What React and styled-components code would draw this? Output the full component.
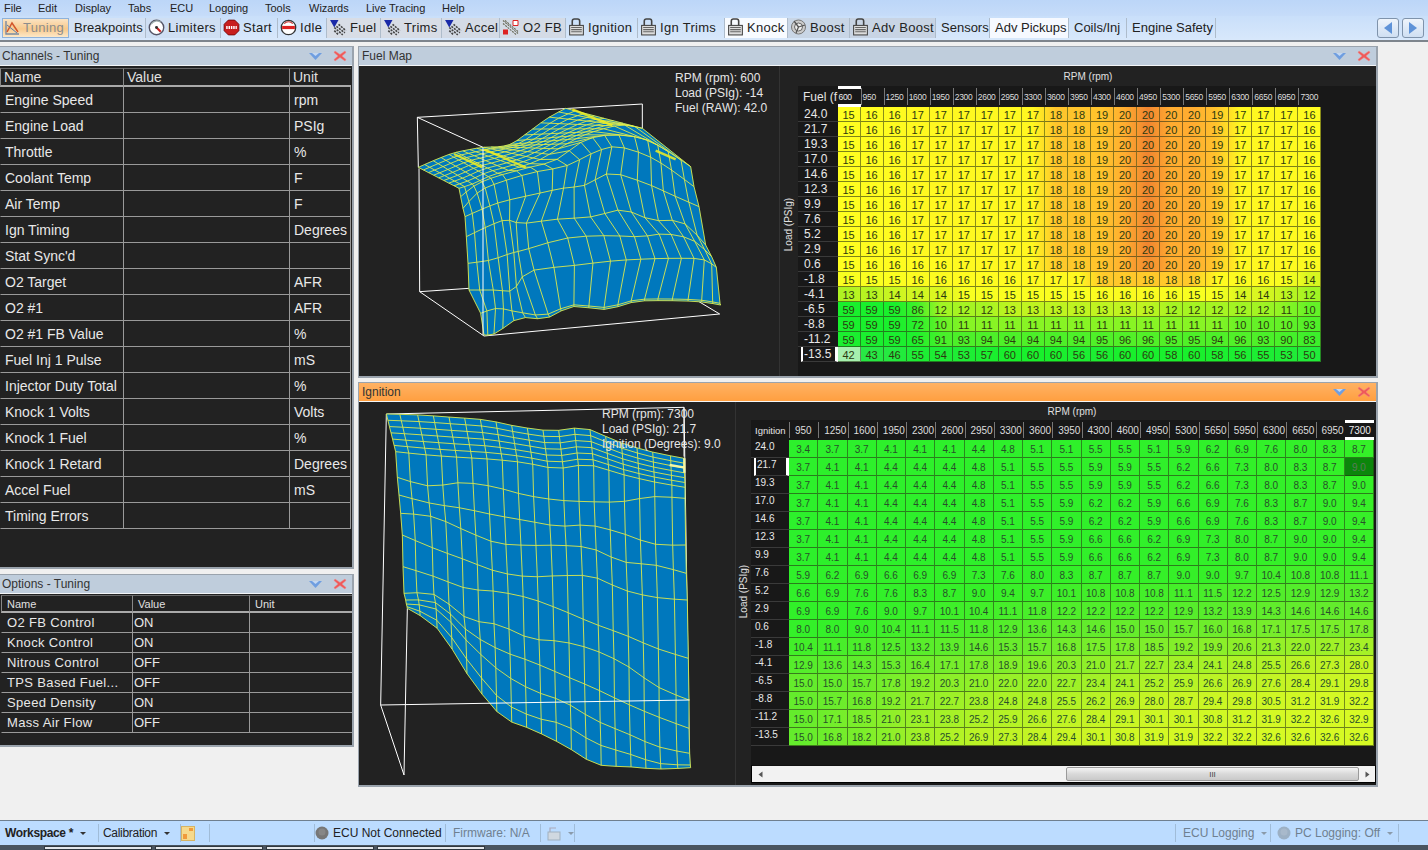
import React from 'react';
import styled, { createGlobalStyle } from 'styled-components';

const Global = createGlobalStyle`
  html, body { margin: 0; padding: 0; background: #f0f0f0; }
  * { box-sizing: border-box; }
  body { font-family: "Liberation Sans", Arial, sans-serif; }
`;

const Page = styled.div`
  width: 1428px; height: 850px; overflow: hidden; display: flex; flex-direction: column;
  background: #f0f0f0; color: #222;
`;
const Menu = styled.div`
  height: 16px; display: flex; align-items: center; padding-left: 4px;
  background: linear-gradient(#bcd6f8, #c6dcf9); font-size: 11px; color: #222;
`;
const MenuItem = styled.span` width: ${p => p.$w}px; flex: none; `;
const TabBar = styled.div`
  height: 26px; display: flex; align-items: stretch; padding: 2px 4px 2px 2px;
  background: linear-gradient(#c9dffa, #d8e8fb); border-bottom: 2px solid #7d848c;
`;
const Tab = styled.div`
  width: ${p => p.$w}px; flex: none; display: flex; align-items: center; gap: 3px; padding-left: ${p => p.$icon ? 2 : 5}px;
  font-size: 13px; letter-spacing: ${p => p.$icon ? 0.3 : 0}px; white-space: nowrap; overflow: hidden; padding-bottom: 2px;
  color: ${p => p.$active ? '#8d8d8d' : '#222'};
  border-right: 1px solid #aebccb;
  background: ${p => p.$active ? 'linear-gradient(#fbe3c2,#f8c98c 55%,#fde8c8)' : p.$bg || 'transparent'};
  ${p => p.$active && 'border: 1px solid #8fb2da;'}
`;
const NavGroup = styled.div` margin-left: auto; display: flex; gap: 3px; `;
const NavButton = styled.button`
  width: 22px; height: 20px; padding: 0; display: flex; align-items: center; justify-content: center;
  border: 1px solid #7f93ab; border-radius: 3px; background: linear-gradient(#eef4fb,#cfdff2);
`;
const Main = styled.div`
  flex: 1; min-height: 0; display: flex; padding-top: 4px; gap: 4px; background: #f0f0f0;
`;
const LeftCol = styled.div` width: 354px; flex: none; display: flex; flex-direction: column; gap: 5px; `;
const RightCol = styled.div` width: 1020px; flex: none; display: flex; flex-direction: column; gap: 4px; `;
const Panel = styled.section`
  height: ${p => p.$h}px; flex: none; display: flex; flex-direction: column;
  border: 1px solid #9aa3ad; border-left-width: ${p => p.$flush ? 0 : 1}px; border-right-width: 2px; border-bottom-width: 2px; background: #f4f6f8;
`;
const PanelHead = styled.header`
  height: 18px; flex: none; display: flex; align-items: center; padding: 0 5px 0 ${p => p.$flush ? 2 : 3}px;
  font-size: 12px; color: #333; background: ${p => p.$hot ? 'linear-gradient(#ffb264,#ff9f40)' : '#bfcddc'};
  margin-bottom: 1px;
`;
const HeadTitle = styled.span` flex: 1; `;
const HeadIcons = styled.span` display: flex; align-items: center; gap: 11px; `;
const PanelBody = styled.div`
  flex: 1; min-height: 0; display: flex; background: #222; position: relative; overflow: hidden;
`;
const TableWrap = styled.div` flex: 1; padding: ${p => p.$p || '2px 2px 0 0'}; background: #222; `;
const DataTable = styled.div`
  display: grid; grid-template-columns: ${p => p.$cols}; color: #e8e8e8; font-size: ${p => p.$fs}px;
`;
const DataHead = styled.div`
  height: ${p => p.$h}px; display: flex; align-items: center; padding-left: ${p => p.$pl}px;
  border-top: 1px solid #666; border-bottom: 2px solid #aaa; border-left: 1px solid #888; font-size: ${p => p.$fs}px; color: #e0e0e0;
`;
const DataCell = styled.div`
  height: ${p => p.$h}px; display: flex; align-items: center; padding-left: ${p => p.$pl}px; white-space: nowrap;
  letter-spacing: ${p => p.$ls || 0}px;
  border-bottom: 1px solid #9a9a9a; border-left: 1px solid ${p => p.$first ? 'transparent' : '#9a9a9a'};
  border-right: ${p => p.$last ? '1px solid #9a9a9a' : '0'};
`;
const ChartArea = styled.div`
  width: ${p => p.$w}px; height: 100%; flex: none; position: relative; border-right: 1px solid #333;
`;
const ChartSvg = styled.svg` display: block; `;
const Readout = styled.div`
  position: absolute; left: ${p => p.$x}px; top: ${p => p.$y}px; color: #e6e6e6; font-size: 12px; line-height: 15px; white-space: nowrap;
`;
const MapArea = styled.div` flex: 1; min-width: 0; display: flex; flex-direction: column; `;
const AxisTitle = styled.div`
  height: ${p => p.$h}px; flex: none; text-align: center; font-size: 10px; color: #e0e0e0; line-height: ${p => p.$h + 1}px;
  padding-left: ${p => p.$pl || 0}px;
`;
const MapRow = styled.div` flex: 1; min-height: 0; display: flex; `;
const YAxis = styled.div`
  width: ${p => p.$w}px; flex: none; display: flex; align-items: center; justify-content: center; padding-bottom: ${p => p.$pb || 0}px;
`;
const YLabel = styled.span`
  transform: rotate(-90deg); white-space: nowrap; font-size: 10px; color: #e0e0e0;
`;
const GridBox = styled.div` flex: 1; min-width: 0; background: #181818; display: flex; flex-direction: column; `;
const HeatGrid = styled.div`
  display: grid; grid-template-columns: ${p => p.$label}px repeat(${p => p.$n}, ${p => p.$cw}px);
  grid-auto-rows: ${p => p.$rh}px; grid-template-rows: ${p => p.$hh}px;
`;
const Corner = styled.div`
  color: #e4e4e4; font-size: ${p => p.$fs}px; display: flex; align-items: center; padding-left: ${p => p.$pl}px; overflow: hidden; white-space: nowrap; justify-content: flex-start;
`;
const ColHead = styled.div`
  color: #ddd; font-size: ${p => p.$fs}px; letter-spacing: ${p => p.$ls || 0}px; display: flex; align-items: center; padding-left: ${p => p.$hp}px;
  border-left: 1px solid #777; margin: 2px 0;
  ${p => p.$sel && 'margin: 0; border-left: 0; border-top: 3px solid #fff; border-bottom: 3px solid #fff; color: #eee;'}
`;
const RowHead = styled.div`
  color: #e8e8e8; font-size: ${p => p.$fs}px; display: flex; align-items: ${p => p.$top ? 'flex-start' : 'center'}; padding-left: ${p => p.$pl}px; 
  padding-top: ${p => p.$top ? 1 : 0}px;
  ${p => p.$sel && 'border-left: 2px solid #fff; border-right: 3px solid #fff; padding-left: 1px; margin-left: 3px;'}
  border-bottom: 1px solid #3a3a3a; overflow: hidden; white-space: nowrap;
`;
const HeatCell = styled.div`
  display: flex; align-items: center; justify-content: center; color: ${p => p.$ink || '#2c3a10'}; font-size: ${p => p.$fs}px;
  border-right: 1px solid rgba(40,50,20,.55); border-bottom: 1px solid rgba(40,50,20,.6); padding-top: ${p => p.$pt || 0}px;
`;
const ScrollBar = styled.div`
  margin-top: auto; margin-bottom: 2px; height: 18px; flex: none; display: flex; align-items: center; background: #f2f2f2; border: 1px solid #000; border-top-color: #111;
`;
const ScrollArrow = styled.span` width: 16px; flex: none; display: flex; justify-content: center; `;
const ScrollTrack = styled.div` flex: 1; display: flex; justify-content: flex-end; height: 100%; padding: 1px 0; `;
const ScrollThumb = styled.div`
  width: 293px; height: 100%; display: flex; align-items: center; justify-content: center; font-size: 8px; color: #444;
  background: linear-gradient(#f4f4f4,#d9d9d9 50%,#c9c9c9); border: 1px solid #9a9a9a; border-radius: 2px;
`;
const Status = styled.footer`
  height: 25px; flex: none; display: flex; align-items: center; background: #bcdcff; border-top: 1px solid #6f7f8f; font-size: 12px; color: #222; padding-left: 5px;
`;
const StatusItem = styled.div`
  display: flex; align-items: center; gap: 4px; flex: none; height: 18px; white-space: nowrap;
  width: ${p => p.$w ? p.$w + 'px' : 'auto'}; margin-left: ${p => p.$ml || 0}px;
  color: ${p => p.$dim ? '#6f8090' : '#222'}; font-weight: ${p => p.$bold ? 700 : 400};
  letter-spacing: ${p => p.$ls || 0}px;
  border-right: ${p => p.$sep ? '1px solid #a0bcd8' : '0'};
  svg { flex: none; }
`;
const Caret = styled.i`
  width: 0; height: 0; border-left: 3px solid transparent; border-right: 3px solid transparent; border-top: 3px solid ${p => p.$dim ? '#8a9aaa' : '#333'}; margin-left: 3px;
`;
const Task = styled.div`
  height: 5px; flex: none; display: flex; gap: 3px; background: #4a5560; padding-left: 44px; padding-top: 1px;
`;
const TaskButton = styled.div` width: 108px; height: 4px; background: #e4e8ec; border: 1px solid #30383f; `;

const CloseIcon = () => (
  <svg width="14" height="12" viewBox="0 0 14 12"><path d="M2 1 L7 4.5 L12 1 L13 2.5 L9 6 L13 9.5 L12 11 L7 7.5 L2 11 L1 9.5 L5 6 L1 2.5Z" fill="#ef5a5a" stroke="#e88" strokeWidth=".5"/></svg>
);
const DropIcon = () => (
  <svg width="13" height="9" viewBox="0 0 13 9"><path d="M0 1 H13 L6.5 8Z" fill="#6f9ee0"/><path d="M3 1 H10 L6.5 4Z" fill="#c4d8f2"/></svg>
);
const HeadButtons = () => <HeadIcons><DropIcon /><CloseIcon /></HeadIcons>;

const IcoTuning = () => <svg width="15" height="15" viewBox="0 0 15 15"><path d="M1 1 V14 H14" fill="none" stroke="#7a8aa0" strokeWidth="1.4"/><path d="M2 12 L7 3 L13 12" fill="none" stroke="#d2562c" strokeWidth="1.5"/><path d="M2 5 L12 13" stroke="#5a7aa8" strokeWidth="1"/></svg>;
const IcoGauge = () => <svg width="17" height="17" viewBox="0 0 16 16"><circle cx="8" cy="8" r="6.8" fill="#fff" stroke="#556" strokeWidth="1.3"/><path d="M3 5 A6 6 0 0 1 12 3" fill="none" stroke="#9aa" strokeWidth="1.2"/><path d="M8 8 L12 12" stroke="#c22" strokeWidth="2"/><circle cx="8" cy="8" r="1.4" fill="#333"/></svg>;
const IcoStart = () => <svg width="17" height="17" viewBox="0 0 16 16"><path d="M5 1 H11 L15 5 V11 L11 15 H5 L1 11 V5Z" fill="#c81e1e" stroke="#600" strokeWidth=".7"/><path d="M3 8 H13" stroke="#fff" strokeWidth="3" strokeDasharray="1.4 .8"/></svg>;
const IcoIdle = () => <svg width="17" height="17" viewBox="0 0 16 16"><circle cx="8" cy="8" r="6.8" fill="#fff" stroke="#333" strokeWidth="1.2"/><path d="M2 8 H14" stroke="#d22" strokeWidth="3"/><path d="M4 4.5 A5 5 0 0 1 12 4.5" fill="none" stroke="#c33" strokeWidth="1"/></svg>;
const IcoFuel = () => <svg width="18" height="17" viewBox="0 0 17 16"><path d="M1 1 H9 L5 8Z" fill="#1a2aa8"/><path d="M5 8 L13 15 M7 7 L15 13 M9 5 L16 11 M5 11 L9 15" stroke="#444" strokeWidth="1.5" strokeDasharray="2 1"/></svg>;
const IcoO2 = () => <svg width="18" height="17" viewBox="0 0 18 16"><path d="M1 1 L16 14 M3 1 L16 12 M1 4 L14 15" stroke="#6a6a58" strokeWidth="1.1" strokeDasharray="2 1"/><path d="M11 1 h5 v5 h-5Z" fill="#fff" stroke="#d22" strokeWidth="1"/><path d="M1 10 h5 v5 h-5Z" fill="#d22"/></svg>;
const IcoLock = () => <svg width="17" height="18" viewBox="0 0 16 17"><path d="M4 7 V3 Q4 1 6 1 H9 Q11 1 11 3 V7" fill="none" stroke="#444" strokeWidth="1.5"/><rect x="1.5" y="7" width="13" height="9" fill="#ddd" stroke="#444"/><path d="M3 9 H13 M3 11 H13 M3 13 H13" stroke="#666" strokeWidth="1"/></svg>;
const IcoBoost = () => <svg width="17" height="16" viewBox="0 0 17 16"><circle cx="8.5" cy="8" r="7" fill="#ccc" stroke="#777"/><circle cx="8.5" cy="8" r="4" fill="#eee" stroke="#666"/><path d="M8.5 8 L4 2 M8.5 8 L15 6 M8.5 8 L6 14" stroke="#555" strokeWidth="1.3"/></svg>;
const IcoFolder = () => <svg width="14" height="15" viewBox="0 0 14 15"><rect x=".5" y=".5" width="13" height="14" fill="#f6d98c" stroke="#d6b463"/><path d="M8 2 h4 v3 h-4Z M2 8 h4 v5 h-4Z" fill="#f09a3c"/></svg>;
const IcoDot = ({ c }) => <svg width="14" height="14" viewBox="0 0 14 14"><circle cx="7" cy="7" r="6.5" fill={c}/><circle cx="7" cy="6" r="3.5" fill="#fff" opacity=".12"/></svg>;
const IcoPad = () => <svg width="14" height="15" viewBox="0 0 14 15"><path d="M3 6 V2 H9" fill="none" stroke="#aab" strokeWidth="1.2"/><rect x="1" y="6" width="12" height="8" fill="#d0d8e0" stroke="#9fb0c0"/></svg>;

const MENUS = [['File',34],['Edit',37],['Display',53],['Tabs',42],['ECU',39],['Logging',56],['Tools',44],['Wizards',57],['Live Tracing',76],['Help',40]];
const TABS = [
  ['Tuning',67,IcoTuning,null,true],['Breakpoints',77,null,'#d4e2f4'],['Limiters',75,IcoGauge,'#cfdff3'],['Start',57,IcoStart],['Idle',49,IcoIdle],
  ['Fuel',54,IcoFuel,'#d8dde6'],['Trims',61,IcoFuel,'#d8dde6'],['Accel',58,IcoFuel,'#d4dbe6'],['O2 FB',66,IcoO2,'#d4dbe6'],['Ignition',72,IcoLock],['Ign Trims',87,IcoLock],
  ['Knock',63,IcoLock,'#f8fbff'],['Boost',62,IcoBoost,'#c9d6e6'],['Adv Boost',86,IcoLock,'#c8d4e4'],['Sensors',54,null],['Adv Pickups',79,null,'#f6f9ff'],['Coils/Inj',58,null],['Engine Safety',89,null],
];

const CHANNELS = [['Engine Speed','rpm'],['Engine Load','PSIg'],['Throttle','%'],['Coolant Temp','F'],['Air Temp','F'],['Ign Timing','Degrees'],["Stat Sync'd",''],['O2 Target','AFR'],['O2 #1','AFR'],['O2 #1 FB Value','%'],['Fuel Inj 1 Pulse','mS'],['Injector Duty Total','%'],['Knock 1 Volts','Volts'],['Knock 1 Fuel','%'],['Knock 1 Retard','Degrees'],['Accel Fuel','mS'],['Timing Errors','']];
const OPTIONS = [['O2 FB Control','ON'],['Knock Control','ON'],['Nitrous Control','OFF'],['TPS Based Fuel...','OFF'],['Speed Density','ON'],['Mass Air Flow','OFF']];

const LOADS = ['24.0','21.7','19.3','17.0','14.6','12.3','9.9','7.6','5.2','2.9','0.6','-1.8','-4.1','-6.5','-8.8','-11.2','-13.5'];
const FUEL_RPM = [600,950,1250,1600,1950,2300,2600,2950,3300,3600,3950,4300,4600,4950,5300,5650,5950,6300,6650,6950,7300];
const IGN_RPM = FUEL_RPM.slice(1);
const F_A = [15,16,16,17,17,17,17,17,17,18,18,19,20,20,20,20,19,17,17,17,16];
const FUEL = [F_A,F_A,F_A,F_A,F_A,F_A,F_A,F_A,F_A,F_A,
  [15,16,16,16,16,17,17,17,17,18,18,19,20,20,20,20,19,17,17,17,16],
  [15,15,15,16,16,16,16,16,17,17,17,18,18,18,18,18,17,16,16,15,14],
  [13,13,14,14,14,15,15,15,15,15,15,16,16,16,16,15,15,14,14,13,12],
  [59,59,59,86,12,12,12,13,13,13,13,13,13,13,12,12,12,12,12,11,10],
  [59,59,59,72,10,11,11,11,11,11,11,11,11,11,11,11,11,10,10,10,93],
  [59,59,59,65,91,93,94,94,94,94,94,95,96,96,95,95,94,96,93,90,83],
  [42,43,46,55,54,53,57,60,60,60,56,56,60,60,58,60,58,56,55,53,50]];
const I_B = [3.7,4.1,4.1,4.4,4.4,4.4,4.8,5.1,5.5,5.5,5.9,5.9,5.5,6.2,6.6,7.3,8.0,8.3,8.7,9.0];
const I_C = [3.7,4.1,4.1,4.4,4.4,4.4,4.8,5.1,5.5,5.9,6.2,6.2,5.9,6.6,6.9,7.6,8.3,8.7,9.0,9.4];
const I_D = [3.7,4.1,4.1,4.4,4.4,4.4,4.8,5.1,5.5,5.9,6.6,6.6,6.2,6.9,7.3,8.0,8.7,9.0,9.0,9.4];
const IGN = [
  [3.4,3.7,3.7,4.1,4.1,4.1,4.4,4.8,5.1,5.1,5.5,5.5,5.1,5.9,6.2,6.9,7.6,8.0,8.3,8.7],
  I_B,I_B,I_C,I_C,I_D,I_D,
  [5.9,6.2,6.9,6.6,6.9,6.9,7.3,7.6,8.0,8.3,8.7,8.7,8.7,9.0,9.0,9.7,10.4,10.8,10.8,11.1],
  [6.6,6.9,7.6,7.6,8.3,8.7,9.0,9.4,9.7,10.1,10.8,10.8,10.8,11.1,11.5,12.2,12.5,12.9,12.9,13.2],
  [6.9,6.9,7.6,9.0,9.7,10.1,10.4,11.1,11.8,12.2,12.2,12.2,12.2,12.9,13.2,13.9,14.3,14.6,14.6,14.6],
  [8.0,8.0,9.0,10.4,11.1,11.5,11.8,12.9,13.6,14.3,14.6,15.0,15.0,15.7,16.0,16.8,17.1,17.5,17.5,17.8],
  [10.4,11.1,11.8,12.5,13.2,13.9,14.6,15.3,15.7,16.8,17.5,17.8,18.5,19.2,19.9,20.6,21.3,22.0,22.7,23.4],
  [12.9,13.6,14.3,15.3,16.4,17.1,17.8,18.9,19.6,20.3,21.0,21.7,22.7,23.4,24.1,24.8,25.5,26.6,27.3,28.0],
  [15.0,15.0,15.7,17.8,19.2,20.3,21.0,22.0,22.0,22.7,23.4,24.1,25.2,25.9,26.6,26.9,27.6,28.4,29.1,29.8],
  [15.0,15.7,16.8,19.2,21.7,22.7,23.8,24.8,24.8,25.5,26.2,26.9,28.0,28.7,29.4,29.8,30.5,31.2,31.9,32.2],
  [15.0,17.1,18.5,21.0,23.1,23.8,25.2,25.9,26.6,27.6,28.4,29.1,30.1,30.1,30.8,31.2,31.9,32.2,32.6,32.9],
  [15.0,16.8,18.2,21.0,23.8,25.2,26.9,27.3,28.4,29.4,30.1,30.8,31.9,31.9,32.2,32.2,32.6,32.6,32.6,32.6]];

const scale = (stops, v) => {
  if (v <= stops[0][0]) return stops[0][1];
  for (let i = 1; i < stops.length; i++) {
    if (v <= stops[i][0]) {
      const [a, ca] = stops[i - 1]; const [b, cb] = stops[i]; const t = (v - a) / (b - a);
      return ca.map((x, k) => x + (cb[k] - x) * t);
    }
  }
  return stops[stops.length - 1][1];
};
const mix = (a, b, t = 0.5) => a.map((x, i) => x + (b[i] - x) * t);
const css = c => `rgb(${c.map(Math.round).join(',')})`;
const FUEL_STOPS = [[4.2,[40,232,70]],[6,[24,240,44]],[9.5,[84,240,40]],[11,[140,244,36]],[13,[196,244,32]],[14.5,[236,248,32]],[15,[255,255,32]],[17,[255,248,32]],[18,[255,196,44]],[19,[255,196,44]],[20,[255,172,48]]];
const IGN_STOPS = [[3,[44,240,44]],[9,[52,240,40]],[15,[100,236,44]],[22,[150,240,40]],[28,[196,244,36]],[33,[216,250,36]]];
const fuelColor = (r, c) => {
  const raw = FUEL[r][c]; const v = raw >= 40 ? raw / 10 : raw;
  const col = scale(FUEL_STOPS, v);
  return c === 13 && r <= 10 ? [240, 132, 48] : col;
};
const ignColor = (r, c) => scale(IGN_STOPS, IGN[r][c]);
const cellBg = (fn, r, c, nc, nr) => {
  const below = r + 1 < nr ? fn(r + 1, c) : fn(r, c);
  const cur = mix(fn(r, c), below, 0.12);
  const l = c > 0 ? mix(cur, fn(r, c - 1)) : cur;
  const rr = c + 1 < nc ? mix(cur, fn(r, c + 1)) : cur;
  return `linear-gradient(90deg, ${css(l)}, ${css(cur)} 50%, ${css(rr)})`;
};

const toRows = s => s.trim().split(/\s+/).map(p => p.split(',').map(Number));
const catmull = (a, b, c, d, t) => 0.5 * (2 * b + (c - a) * t + (2 * a - 5 * b + 4 * c - d) * t * t + (3 * b - a - 3 * c + d) * t * t * t);
const buildMesh = (keys, spans, cols) => {
  const samples = keys.map(toRows);
  const rows = [];
  const atU = (row, u) => {
    const n = row.length;
    const t = u * (n - 1); const i = Math.min(Math.floor(t), n - 2); const f = t - i;
    const p0 = row[Math.max(i - 1, 0)]; const p1 = row[i]; const p2 = row[i + 1]; const p3 = row[Math.min(i + 2, n - 1)];
    return [catmull(p0[0], p1[0], p2[0], p3[0], f), catmull(p0[1], p1[1], p2[1], p3[1], f)];
  };
  samples.forEach((row, k) => {
    const span = k < samples.length - 1 ? spans[k] : 1;
    for (let j = 0; j < span; j++) {
      const f = j / span;
      const line = [];
      for (let c = 0; c < cols; c++) {
        const u = c / (cols - 1); const a = atU(row, u);
        if (j === 0) line.push(a);
        else { const b = atU(samples[k + 1], u); line.push([a[0] + (b[0] - a[0]) * f, a[1] + (b[1] - a[1]) * f]); }
      }
      rows.push(line);
    }
  });
  let quads = ''; let lines = '';
  const P = p => `${p[0].toFixed(1)} ${p[1].toFixed(1)}`;
  rows.forEach((line, r) => {
    lines += 'M' + line.map(P).join('L');
    if (r < rows.length - 1) for (let c = 0; c < cols - 1; c++) quads += `M${P(line[c])}L${P(line[c + 1])}L${P(rows[r + 1][c + 1])}L${P(rows[r + 1][c])}Z`;
  });
  for (let c = 0; c < cols; c++) lines += 'M' + rows.map(l => P(l[c])).join('L');
  return { quads, lines };
};

const FUEL_MESH = buildMesh([
  '178,322 228,300 280,280 325,270 372,262 420,260 460,250 510,215 565,175 620,145',
  '300,385 345,370 400,345 470,325 540,300 600,265 660,232 720,210 790,195 850,205',
  '305,410 350,375 410,350 500,325 590,300 670,245 750,225 850,235 920,270 995,320',
  '312,445 360,395 420,368 520,338 620,318 700,280 770,260 860,285 930,325 1005,380',
  '318,470 375,445 430,425 530,402 610,385 680,375 755,340 860,370 940,405 1020,440',
  '322,530 385,500 440,480 490,490 590,478 700,470 790,450 880,480 970,487 1040,555',
  '327,610 395,600 455,580 495,570 620,535 740,527 840,530 920,522 1000,540 1058,590',
  '330,690 410,690 462,690 510,635 640,617 760,603 860,597 950,595 1030,598 1072,622',
  '365,760 415,745 472,755 555,765 640,735 740,742 830,720 920,717 1020,720 1083,730',
  '375,825 410,820 480,775 560,775 640,740 740,748 830,725 920,722 1020,725 1085,735',
], [8,1,1,1,1,1,1,1,1], 21);

const ignRow = (l, r, ys) => ys.map((y, k) => `${l + (r - l) * k / 9},${y}`).join(' ');
const IGN_MESH = buildMesh([
  ignRow(82, 975, [42,45,52,60,80,92,85,125,155,175]),
  ignRow(110, 978, [155,165,172,178,188,205,195,222,245,262]),
  ignRow(115, 978, [232,258,248,260,285,300,305,305,290,295]),
  ignRow(120, 980, [285,310,325,345,362,378,376,400,432,435]),
  ignRow(125, 982, [340,350,390,428,436,436,445,485,495,520]),
  ignRow(130, 985, [405,445,480,515,530,527,530,570,592,600]),
  ignRow(132, 988, [500,530,565,575,595,630,670,705,745,775]),
  ignRow(135, 990, [580,585,655,675,715,725,750,795,860,900]),
  ignRow(140, 990, [600,610,695,750,785,825,865,910,950,985]),
  ignRow(142, 992, [612,630,730,815,870,905,960,1000,1040,1060]),
  ignRow(144, 994, [620,665,790,900,950,975,1030,1060,1090,1095]),
  ignRow(145, 995, [625,690,835,948,990,1037,1092,1100,1107,1103]),
], [6,1,1,1,1,1,1,1,1,1,1], 20);

const FuelSurface = () => (
  <ChartSvg width="420" height="308" viewBox="0 18 1260 924">
    <path d="M175 172 L850 132 V205 M175 172 L178 322 M175 172 L372 262 M180 325 L182 695 L330 685 M182 695 L375 828 L1082 762 L1020 725" fill="none" stroke="#fff" strokeWidth="3"/>
    <path d={FUEL_MESH.quads} fill="#0078bd" stroke="#0078bd" strokeWidth="1"/>
    <path d={FUEL_MESH.lines} fill="none" stroke="#e6ee48" strokeWidth="2.6"/>
    <path d="M640 148 L760 196 M890 272 L950 298 M285 282 L370 322 M375 268 L500 322" stroke="#f2f020" strokeWidth="7" fill="none" opacity=".85"/>
    <path d="M372 262 V825" stroke="#fff" strokeWidth="3"/>
  </ChartSvg>
);
const IgnSurface = () => (
  <ChartSvg width="376" height="382" viewBox="0 6 1128 1146">
    <path d="M82 42 L975 22 V170 M82 42 L65 915 L135 1125 L145 625 M975 22 L992 1100" fill="none" stroke="#fff" strokeWidth="3"/>
    <path d={IGN_MESH.quads} fill="#0078bd" stroke="#0078bd" strokeWidth="1"/>
    <path d={IGN_MESH.lines} fill="none" stroke="#e6ee48" strokeWidth="2.6"/>
    <path d="M65 915 L992 900" stroke="#fff" strokeWidth="3" fill="none"/>
    <path d="M932 195 L978 203 M976 175 V218" stroke="#f4f6a0" strokeWidth="7"/>
  </ChartSvg>
);

const Arrow = ({ dir, color = '#5f93d8', size = 10 }) => (
  <svg width={size} height={size * 1.4} viewBox="0 0 10 14"><path d={dir === 'l' ? 'M9 1 V13 L1 7Z' : 'M1 1 V13 L9 7Z'} fill={color}/></svg>
);

export default function App() {
  return (
    <Page>
      <Global />
      <Menu>{MENUS.map(([t, w]) => <MenuItem key={t} $w={w}>{t}</MenuItem>)}</Menu>
      <TabBar>
        {TABS.map(([t, w, I, bg, active]) => (
          <Tab key={t} $w={w} $bg={bg} $active={active} $icon={!!I}>{I && <I />}{t}</Tab>
        ))}
        <NavGroup>
          <NavButton><Arrow dir="l" /></NavButton>
          <NavButton><Arrow dir="r" /></NavButton>
        </NavGroup>
      </TabBar>
      <Main>
        <LeftCol>
          <Panel $h={523} $flush>
            <PanelHead $flush><HeadTitle>Channels - Tuning</HeadTitle><HeadButtons /></PanelHead>
            <PanelBody>
              <TableWrap>
                <DataTable $cols="123px 166px 62px" $fs={14}>
                  <DataHead $h={19} $pl={3} $fs={14}>Name</DataHead>
                  <DataHead $h={19} $pl={3} $fs={14}>Value</DataHead>
                  <DataHead $h={19} $pl={3} $fs={14}>Unit</DataHead>
                  {CHANNELS.map(([n, u]) => (
                    <React.Fragment key={n}>
                      <DataCell $h={26} $pl={4} $first>{n}</DataCell>
                      <DataCell $h={26} $pl={2} />
                      <DataCell $h={26} $pl={4} $last>{u}</DataCell>
                    </React.Fragment>
                  ))}
                </DataTable>
              </TableWrap>
            </PanelBody>
          </Panel>
          <Panel $h={173} $flush>
            <PanelHead $flush><HeadTitle>Options - Tuning</HeadTitle><HeadButtons /></PanelHead>
            <PanelBody>
              <TableWrap $p="1px 0 0 1px">
                <DataTable $cols="131px 117px 103px" $fs={13}>
                  <DataHead $h={18} $pl={5} $fs={11}>Name</DataHead>
                  <DataHead $h={18} $pl={5} $fs={11}>Value</DataHead>
                  <DataHead $h={18} $pl={5} $fs={11}>Unit</DataHead>
                  {OPTIONS.map(([n, v]) => (
                    <React.Fragment key={n}>
                      <DataCell $h={20} $pl={5} $first $ls={0.35}>{n}</DataCell>
                      <DataCell $h={20} $pl={1}>{v}</DataCell>
                      <DataCell $h={20} $pl={2} />
                    </React.Fragment>
                  ))}
                </DataTable>
              </TableWrap>
            </PanelBody>
          </Panel>
        </LeftCol>
        <RightCol>
          <Panel $h={332}>
            <PanelHead>
              <HeadTitle>Fuel Map</HeadTitle><HeadButtons />
            </PanelHead>
            <PanelBody>
              <ChartArea $w={421}>
                <FuelSurface />
                <Readout $x={316} $y={5}>RPM (rpm): 600<br />Load (PSIg): -14<br />Fuel (RAW): 42.0</Readout>
              </ChartArea>
              <MapArea>
                <AxisTitle $h={20} $pl={20}>RPM (rpm)</AxisTitle>
                <MapRow>
                  <YAxis $w={18} $pb={14}><YLabel>Load (PSIg)</YLabel></YAxis>
                  <GridBox>
                    <HeatGrid $label={39.5} $n={21} $cw={23.05} $rh={15} $hh={21}>
                      <Corner $fs={12} $pl={5}>Fuel (f</Corner>
                      {FUEL_RPM.map((v, c) => <ColHead key={v} $fs={8.5} $ls={-0.3} $hp={1} $sel={c === 0}>{v}</ColHead>)}
                      {LOADS.map((l, r) => (
                        <React.Fragment key={l}>
                          <RowHead $fs={12} $pl={6} $sel={r === 16}>{l}</RowHead>
                          {FUEL[r].map((v, c) => (
                            r === 16 && c === 0
                              ? <HeatCell key={c} $fs={11} $pt={1} style={{ background: '#a6f0ae' }}>{v}</HeatCell>
                              : <HeatCell key={c} $fs={11} $pt={1} style={{ background: cellBg(fuelColor, r, c, 21, 17) }}>{v}</HeatCell>
                          ))}
                        </React.Fragment>
                      ))}
                    </HeatGrid>
                  </GridBox>
                </MapRow>
              </MapArea>
            </PanelBody>
          </Panel>
          <Panel $h={405}>
            <PanelHead $hot>
              <HeadTitle>Ignition</HeadTitle><HeadButtons />
            </PanelHead>
            <PanelBody>
              <ChartArea $w={377}>
                <IgnSurface />
                <Readout $x={243} $y={5}>RPM (rpm): 7300<br />Load (PSIg): 21.7<br />Ignition (Degrees): 9.0</Readout>
              </ChartArea>
              <MapArea>
                <AxisTitle $h={18} $pl={32}>RPM (rpm)</AxisTitle>
                <MapRow>
                  <YAxis $w={15} $pb={22}><YLabel>Load (PSIg)</YLabel></YAxis>
                  <GridBox>
                    <HeatGrid $label={38} $n={20} $cw={29.25} $rh={18} $hh={20}>
                      <Corner $fs={9.5} $pl={4}>Ignition</Corner>
                      {IGN_RPM.map((v, c) => <ColHead key={v} $fs={10} $ls={-0.1} $hp={c === 19 ? 4 : 5} $sel={c === 19}>{v}</ColHead>)}
                      {LOADS.map((l, r) => (
                        <React.Fragment key={l}>
                          <RowHead $fs={10} $pl={4} $top $sel={r === 1}>{l}</RowHead>
                          {IGN[r].map((v, c) => (
                            r === 1 && c === 19
                              ? <HeatCell key={c} $fs={10} $pt={2} $ink="#5a7a5a" style={{ background: '#0b860b' }}>{v.toFixed(1)}</HeatCell>
                              : <HeatCell key={c} $fs={10} $pt={2} $ink="#28502a" style={{ background: cellBg(ignColor, r, c, 20, 17) }}>{v.toFixed(1)}</HeatCell>
                          ))}
                        </React.Fragment>
                      ))}
                    </HeatGrid>
                    <ScrollBar>
                      <ScrollArrow><Arrow dir="l" color="#555" size={5} /></ScrollArrow>
                      <ScrollTrack><ScrollThumb>III</ScrollThumb></ScrollTrack>
                      <ScrollArrow><Arrow dir="r" color="#555" size={5} /></ScrollArrow>
                    </ScrollBar>
                  </GridBox>
                </MapRow>
              </MapArea>
            </PanelBody>
          </Panel>
        </RightCol>
      </Main>
      <Status>
        <StatusItem $w={94} $bold $sep $ls={-0.35}>Workspace *<Caret /></StatusItem>
        <StatusItem $w={78} $ml={4} $sep $ls={-0.3}>Calibration<Caret /></StatusItem>
        <StatusItem $w={29} $sep><IcoFolder /></StatusItem>
        <StatusItem $w={105} $sep />
        <StatusItem $w={131} $sep><IcoDot c="#777" />ECU Not Connected</StatusItem>
        <StatusItem $w={88} $ml={7} $dim $sep>Firmware: N/A</StatusItem>
        <StatusItem $w={28} $ml={6} $sep><IcoPad /><Caret $dim /></StatusItem>
        <StatusItem $w={601} $sep />
        <StatusItem $w={88} $ml={7} $dim $sep>ECU Logging<Caret $dim /></StatusItem>
        <StatusItem $w={122} $ml={6} $dim $sep><IcoDot c="#9cb0c4" />PC Logging: Off<Caret $dim /></StatusItem>
      </Status>
      <Task>
        <TaskButton /><TaskButton /><TaskButton /><TaskButton />
      </Task>
    </Page>
  );
}
